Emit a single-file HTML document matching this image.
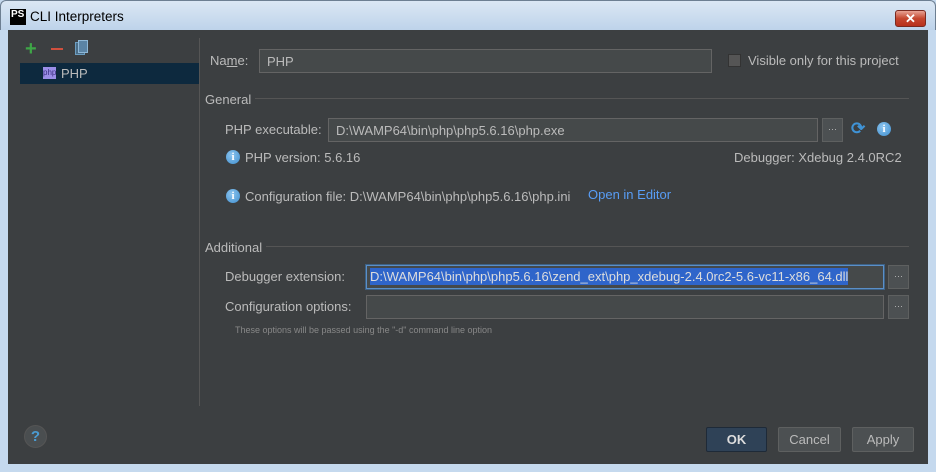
<!DOCTYPE html>
<html><head><style>
*{margin:0;padding:0;box-sizing:border-box}
body{width:936px;height:472px;position:relative;overflow:hidden;background:#c5d9ee;font-family:"Liberation Sans","Noto Sans CJK SC",sans-serif;font-size:13px;color:#bbbbbb}
.a{position:absolute;white-space:nowrap}
.title{left:0;top:0;width:936px;height:30px;background:linear-gradient(#dbe7f4,#bed3ea);border:1px solid #6d7f92;border-bottom:none;border-radius:6px 6px 0 0}
.main{left:8px;top:30px;width:920px;height:434px;background:#3c3f41}
.inp{background:#45494a;border:1px solid #646464;height:24px;color:#bbb;padding:4px 7px}
.btn{border:1px solid #5e6060;background:#4c5052;height:24px;width:21px;color:#bbb;font-size:9px;text-align:center;line-height:20px}
.info{width:14px;height:14px;border-radius:50%;background:radial-gradient(circle at 40% 35%,#8cc4ee,#3f8fcf);color:#fff;font-size:11px;font-weight:bold;text-align:center;line-height:14px;font-family:"Liberation Serif",serif}
.hr{height:1px;background:#555}
.b{height:25px;border:1px solid #5e6060;background:#4c5052;text-align:center;line-height:23px;font-size:13px;border-radius:2px}
</style></head><body>
<div class="a title"></div>
<div class="a" style="left:10px;top:9px;width:16px;height:16px;background:#000;color:#fff;font-size:10px;font-weight:bold;line-height:12px;padding-left:1px">PS</div>
<div class="a" style="left:30px;top:9px;font-size:13.5px;color:#000">CLI Interpreters</div>
<div class="a" style="left:895px;top:10px;width:31px;height:17px;border:1px solid #7a2a20;border-radius:3px;background:linear-gradient(#e8a394,#c5472f 50%,#b8301c);color:#fff;text-align:center;font-size:13px;font-weight:bold;line-height:15px">✕</div>
<div class="a main"></div>
<div class="a" style="left:25px;top:39px;color:#3ea647;font-size:20px;font-weight:bold;line-height:20px">+</div>
<div class="a" style="left:51px;top:48px;width:12px;height:2px;background:#d0503e"></div>
<div class="a" style="left:75px;top:42px;width:10px;height:13px;border:1px solid #6b9dc0;background:#4a6c86"></div>
<div class="a" style="left:78px;top:40px;width:10px;height:13px;border:1px solid #8fb8d7;background:#5b84a5"></div>
<div class="a" style="left:20px;top:63px;width:179px;height:21px;background:#0d293e"></div>
<div class="a" style="left:43px;top:67px;width:13px;height:12px;background:#9b8ee8;color:#3b2f80;font-size:8px;line-height:12px;text-align:center">php</div>
<div class="a" style="left:61px;top:66px">PHP</div>
<div class="a" style="left:199px;top:38px;width:1px;height:368px;background:#555"></div>
<div class="a" style="left:24px;top:425px;width:23px;height:23px;border-radius:50%;background:#4a4e50;border:1px solid #555;color:#4b9cd3;font-weight:bold;text-align:center;line-height:21px;font-size:15px">?</div>
<div class="a" style="left:210px;top:53px">Na<u>m</u>e:</div>
<div class="a inp" style="left:259px;top:49px;width:453px">PHP</div>
<div class="a" style="left:728px;top:54px;width:13px;height:13px;background:#555;border:1px solid #333"></div>
<div class="a" style="left:748px;top:53px">Visible only for this project</div>
<div class="a" style="left:205px;top:92px">General</div>
<div class="a hr" style="left:255px;top:98px;width:654px"></div>
<div class="a" style="left:225px;top:122px">PHP executable:</div>
<div class="a inp" style="left:328px;top:118px;width:490px">D:\WAMP64\bin\php\php5.6.16\php.exe</div>
<div class="a btn" style="left:822px;top:118px">···</div>
<div class="a" style="left:851px;top:119px;color:#3f93d6;font-size:17px;font-weight:bold">⟳</div>
<div class="a info" style="left:877px;top:122px">i</div>
<div class="a info" style="left:226px;top:150px">i</div>
<div class="a" style="left:245px;top:150px">PHP version: 5.6.16</div>
<div class="a" style="left:734px;top:150px">Debugger: Xdebug 2.4.0RC2</div>
<div class="a info" style="left:226px;top:189px">i</div>
<div class="a" style="left:245px;top:189px">Configuration file: D:\WAMP64\bin\php\php5.6.16\php.ini</div>
<div class="a" style="left:588px;top:187px;color:#589df6">Open in Editor</div>
<div class="a" style="left:205px;top:240px">Additional</div>
<div class="a hr" style="left:266px;top:246px;width:643px"></div>
<div class="a" style="left:225px;top:269px">Debugger extension:</div>
<div class="a inp" style="left:366px;top:265px;width:518px;border-color:#5a8fc8;box-shadow:0 0 0 1px #3d6185;padding:3px 3px"><span style="background:#2f65ca;color:#ddd;padding:1px 0">D:\WAMP64\bin\php\php5.6.16\zend_ext\php_xdebug-2.4.0rc2-5.6-vc11-x86_64.dll</span></div>
<div class="a btn" style="left:888px;top:265px">···</div>
<div class="a" style="left:225px;top:299px">Configuration options:</div>
<div class="a inp" style="left:366px;top:295px;width:518px"></div>
<div class="a btn" style="left:888px;top:295px">···</div>
<div class="a" style="left:235px;top:325px;font-size:9px;color:#888">These options will be passed using the "-d" command line option</div>
<div class="a b" style="left:706px;top:427px;width:61px;background:#2f4257;border-color:#1e2a38;color:#ddd;font-weight:bold">OK</div>
<div class="a b" style="left:778px;top:427px;width:63px">Cancel</div>
<div class="a b" style="left:852px;top:427px;width:62px">Apply</div>
</body></html>
